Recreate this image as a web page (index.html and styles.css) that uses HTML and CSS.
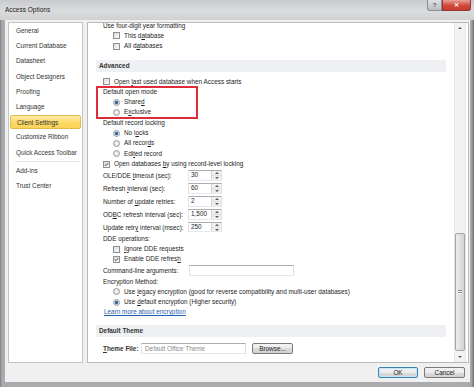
FILE: index.html
```html
<!DOCTYPE html>
<html lang="en">
<head>
<meta charset="utf-8">
<title>Access Options</title>
<link rel="stylesheet" href="styles.css">
</head>
<body>
<div class="window">
  <div class="titlebar">
    <span class="title">Access Options</span>
    <div class="caption">
      <span class="cap-help">?</span>
      <span class="cap-close">&#x2715;</span>
    </div>
  </div>

  <div class="client">
    <div class="main">
      <ul class="nav">
        <li>General</li>
        <li>Current Database</li>
        <li>Datasheet</li>
        <li>Object Designers</li>
        <li>Proofing</li>
        <li>Language</li>
        <li class="active">Client Settings</li>
        <li>Customize Ribbon</li>
        <li>Quick Access Toolbar</li>
        <li class="sep"></li>
        <li>Add-ins</li>
        <li>Trust Center</li>
      </ul>

      <div class="panel">
        <div class="body">
          <div class="row first lvl1">Use four-digit year formatting</div>
          <div class="row tall lvl2"><span class="cb"></span><span>This d<u>a</u>tabase</span></div>
          <div class="row tall lvl2"><span class="cb"></span><span>All d<u>a</u>tabases</span></div>

          <div class="band">Advanced</div>
          <div class="after-band"></div>
          <div class="row lvl1"><span class="cb"></span><span>Open <u>l</u>ast used database when Access starts</span></div>

          <div class="marked">
            <div class="row in1">Default open mode</div>
            <div class="row in2"><span class="rb on"></span><span>Share<u>d</u></span></div>
            <div class="row in2"><span class="rb"></span><span>E<u>x</u>clusive</span></div>
          </div>

          <div class="row lvl1">Default record locking</div>
          <div class="row lvl2"><span class="rb on"></span><span>No l<u>o</u>cks</span></div>
          <div class="row lvl2"><span class="rb"></span><span>All recor<u>d</u>s</span></div>
          <div class="row lvl2"><span class="rb"></span><span>Edi<u>t</u>ed record</span></div>
          <div class="row lvl1"><span class="cb on"><svg viewBox="0 0 7 7"><path d="M1.2 3.5 2.8 5.1 5.8 1.5"/></svg></span><span>Open databases <u>b</u>y using record-level locking</span></div>

          <div class="srow lvl1"><span class="slabel">OLE/DDE <u>t</u>imeout (sec):</span><span class="num"><span class="val">30</span><span class="spin"><i class="up"></i><i class="dn"></i></span></span></div>
          <div class="srow lvl1"><span class="slabel">Refresh <u>i</u>nterval (sec):</span><span class="num"><span class="val">60</span><span class="spin"><i class="up"></i><i class="dn"></i></span></span></div>
          <div class="srow lvl1"><span class="slabel">Number of <u>u</u>pdate retries:</span><span class="num"><span class="val">2</span><span class="spin"><i class="up"></i><i class="dn"></i></span></span></div>
          <div class="srow lvl1"><span class="slabel">OD<u>B</u>C refresh interval (sec):</span><span class="num"><span class="val">1,500</span><span class="spin"><i class="up"></i><i class="dn"></i></span></span></div>
          <div class="srow lvl1"><span class="slabel">Update retr<u>y</u> interval (msec):</span><span class="num"><span class="val">250</span><span class="spin"><i class="up"></i><i class="dn"></i></span></span></div>

          <div class="row lvl1">DDE operations:</div>
          <div class="row lvl2"><span class="cb"></span><span><u>I</u>gnore DDE requests</span></div>
          <div class="row lvl2"><span class="cb on"><svg viewBox="0 0 7 7"><path d="M1.2 3.5 2.8 5.1 5.8 1.5"/></svg></span><span>Enable DDE refres<u>h</u></span></div>
          <div class="crow lvl1"><span class="clabel">Command-line arguments:</span><span class="field wide"></span></div>
          <div class="row lvl1">Encryption Method:</div>
          <div class="row lvl2"><span class="rb"></span><span>Use <u>l</u>egacy encryption (good for reverse compatibility and multi-user databases)</span></div>
          <div class="row lvl2"><span class="rb on"></span><span>Use <u>d</u>efault encryption (Higher security)</span></div>
          <div class="row link-row"><a class="link" href="#">Learn more about encryption</a></div>

          <div class="band band2">Default Theme</div>
          <div class="theme-row lvl1">
            <span class="tlabel"><u>T</u>heme File:</span>
            <span class="field wide hint">Default Office Theme</span>
            <button class="btn browse">Browse...</button>
          </div>
        </div>

        <div class="scrollbar">
          <div class="sb-arrow"><i class="up"></i></div>
          <div class="sb-track"><div class="sb-thumb"><span class="grip"></span></div></div>
          <div class="sb-arrow"><i class="dn"></i></div>
        </div>
      </div>
    </div>

    <div class="footer">
      <button class="btn default">OK</button>
      <button class="btn">Cancel</button>
    </div>
  </div>
</div>
</body>
</html>
```

FILE: styles.css
```css
body {
  margin: 0;
  background: #9c9ea1;
  font-family: "Liberation Sans", Arial, sans-serif;
  font-size: 6.4px;
  color: #1e1e1e;
}

.window {
  width: 474px;
  height: 387px;
  box-sizing: border-box;
  padding: 0 4px 5px 5px;
  background: linear-gradient(to right, #7d7f82 0, #a9abae 2px, #a9abae 471px, #6f7174 474px);
  display: flex;
  flex-direction: column;
}

/* title bar */
.titlebar {
  height: 20px;
  margin: 0 -4px 0 -5px;
  padding: 0 3px 0 5px;
  background: linear-gradient(to bottom, #c9cbce, #dadbdd 55%, #cfd1d3);
  display: flex;
  align-items: flex-start;
}
.title {
  padding-top: 5.5px;
  font-size: 6.5px;
  color: #1a1a1a;
}
.caption {
  margin-left: auto;
  display: flex;
}
.cap-help, .cap-close {
  height: 11px;
  line-height: 11px;
  text-align: center;
  font-size: 6px;
  font-weight: bold;
  border: 1px solid #8a8c90;
  border-top: 0;
  box-sizing: border-box;
}
.cap-help {
  width: 15px;
  color: #556;
  background: linear-gradient(#dfe1e4, #b9bcc1);
  border-radius: 0 0 0 3px;
}
.cap-close {
  width: 29px;
  color: #fff;
  background: linear-gradient(#e8a196, #d2493d 55%, #c93a2e);
  border-color: #8c3a34;
  border-radius: 0 0 3px 0;
}

/* client area */
.client {
  flex: 1;
  background: #f0f0f0;
  padding: 2px 1px 0 3px;
  display: flex;
  flex-direction: column;
}
.main {
  height: 341px;
  display: flex;
  gap: 4px;
}

.nav {
  list-style: none;
  margin: 0;
  padding: 0;
  width: 75px;
  box-sizing: border-box;
  background: #fff;
  border: 1px solid #c4c4c4;
  color: #333;
}
.nav li {
  height: 15.2px;
  line-height: 15.2px;
  padding-left: 7px;
}
.nav li.active {
  height: 14px;
  line-height: 13px;
  margin: 0.6px 1px;
  padding-left: 6px;
  box-sizing: border-box;
  border: 1px solid #e2b94a;
  border-radius: 2px;
  background: linear-gradient(#fdeca8, #fcd660 60%, #fbd35c);
}
.nav li.sep {
  height: 1px;
  padding: 0;
  margin: 1px 2px 1px 6px;
  background: #e2e2e2;
}

/* right options panel */
.panel {
  width: 382px;
  box-sizing: border-box;
  border: 1px solid #b9b9b9;
  background: #fff;
  display: flex;
}
.body {
  flex: 1;
  overflow: hidden;
  margin-top: -2px;
}

.row {
  height: 10.3px;
  line-height: 10.3px;
  display: flex;
  align-items: center;
  white-space: pre;
}
.row.first { height: 9.5px; line-height: 9.5px; }
.row.tall { height: 10.5px; line-height: 10.5px; }
.lvl1 { padding-left: 15px; }
.lvl2 { padding-left: 25px; }
.in1 { padding-left: 6px; }
.in2 { padding-left: 16px; }
.link-row { padding-left: 16px; }

.band {
  margin: 8.5px 8px 0 8px;
  height: 12px;
  line-height: 12px;
  padding-left: 3px;
  background: #eef0f3;
  font-weight: bold;
  color: #333;
}
.after-band { height: 4.5px; }
.band2 { margin-top: 7.2px; }

.marked {
  margin-left: 9px;
  width: 100px;
  outline: 2px solid #dc2d38;
  outline-offset: -1px;
}

/* check boxes and radios */
.cb, .rb {
  width: 7px;
  height: 7px;
  box-sizing: border-box;
  margin-right: 4px;
  flex: none;
  border: 1px solid #8e8f8f;
  background: linear-gradient(135deg, #dcdcdc, #fbfbfb);
}
.cb svg {
  display: block;
  width: 5px;
  height: 5px;
}
.cb svg path {
  fill: none;
  stroke: #2b2b2b;
  stroke-width: 1.2;
}
.rb {
  border-radius: 50%;
  border-color: #9a9a9a;
  background: radial-gradient(circle, #f7f7f7, #d9d9d9);
}
.rb.on {
  background: radial-gradient(circle, #1e4b7e 0, #3a6fa6 1.3px, #c9d7e6 2px, #f2f2f2 3px);
}

/* spinner rows */
.srow {
  height: 12.9px;
  display: flex;
  align-items: center;
  white-space: nowrap;
}
.slabel { width: 85px; }
.num {
  width: 34px;
  height: 10.5px;
  box-sizing: border-box;
  border: 1px solid #abadb3;
  border-color: #abadb3 #dbdfe6 #e3e9ef #e2e3ea;
  display: flex;
}
.val {
  flex: 1;
  padding-left: 2px;
  line-height: 8.5px;
}
.spin {
  width: 9px;
  display: flex;
  flex-direction: column;
  border-left: 1px solid #d4d4d4;
  background: #f0f0f0;
}
.spin i {
  flex: 1;
  display: flex;
  align-items: center;
  justify-content: center;
}
.spin i::after, .sb-arrow i::after {
  content: "";
  border-left: 2px solid transparent;
  border-right: 2px solid transparent;
}
.spin i.up::after, .sb-arrow i.up::after { border-bottom: 2px solid #5a5a5a; }
.spin i.dn::after, .sb-arrow i.dn::after { border-top: 2px solid #5a5a5a; }
.spin i.up { border-bottom: 1px solid #e0e0e0; }

.crow {
  height: 12px;
  display: flex;
  align-items: center;
  white-space: nowrap;
}
.clabel { width: 86px; }
.field {
  height: 11px;
  box-sizing: border-box;
  border: 1px solid #abadb3;
  border-color: #abadb3 #dbdfe6 #e3e9ef #e2e3ea;
  background: #fff;
}
.field.wide { width: 105px; }
.hint {
  color: #8c8c8c;
  padding-left: 3px;
  line-height: 9px;
}

.link {
  color: #1f5fb0;
  text-decoration: underline;
}

.theme-row {
  margin-top: 6px;
  height: 11px;
  display: flex;
  align-items: center;
}
.tlabel {
  width: 38px;
  font-weight: bold;
  color: #333;
}

/* buttons */
.btn {
  height: 11px;
  padding: 0;
  box-sizing: border-box;
  font-family: inherit;
  font-size: 6.4px;
  color: #222;
  border: 1px solid #7a7a7a;
  border-radius: 2px;
  background: linear-gradient(#f3f3f3, #ebebeb 50%, #dddddd 50%, #cfcfcf);
}
.browse {
  width: 41px;
  margin-left: 6px;
}
.footer {
  margin-top: 4px;
  padding-right: 4px;
  display: flex;
  justify-content: flex-end;
  gap: 6px;
}
.footer .btn { width: 41px; }
.footer .btn.default {
  width: 40px;
  border-color: #3c7fb1;
  box-shadow: inset 0 0 0 1px #bfe6f9;
}

/* scroll bar */
.scrollbar {
  width: 10px;
  margin-right: 2px;
  display: flex;
  flex-direction: column;
  background: #f2f2f2;
  border-left: 1px solid #e6e6e6;
  border-right: 1px solid #e6e6e6;
}
.sb-arrow {
  height: 10px;
  display: flex;
  align-items: center;
  justify-content: center;
}
.sb-arrow i { display: flex; }
.sb-track {
  flex: 1;
  display: flex;
  flex-direction: column;
  justify-content: flex-end;
}
.sb-thumb {
  height: 118px;
  margin: 0 0 1px 0;
  box-sizing: border-box;
  border: 1px solid #a3a3a3;
  border-radius: 2px;
  background: linear-gradient(to right, #ececec, #e0e0e0 50%, #d3d3d3);
  display: flex;
  align-items: center;
  justify-content: center;
}
.grip {
  width: 4px;
  height: 4px;
  background: repeating-linear-gradient(#8a8a8a 0 1px, #f4f4f4 1px 2px);
}
```
